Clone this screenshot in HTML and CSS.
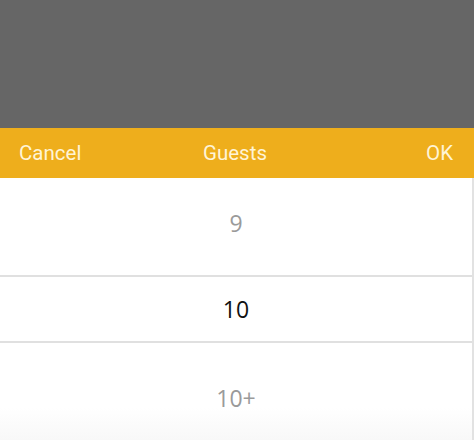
FILE: index.html
```html
<!DOCTYPE html>
<html>
<head>
<meta charset="utf-8">
<link rel="stylesheet" href="styles.css">
</head>
<body>
<div class="screen">
  <div class="backdrop"></div>
  <div class="toolbar">
    <span class="btn btn-left">Cancel</span>
    <span class="title">Guests</span>
    <span class="btn btn-right">OK</span>
  </div>
  <div class="picker">
    <div class="row row-top"><span class="item dim">9</span></div>
    <div class="divider"></div>
    <div class="row row-mid"><span class="item sel">10</span></div>
    <div class="divider"></div>
    <div class="row row-bot"><span class="item dim">10+</span></div>
  </div>
</div>
</body>
</html>
```
FILE: styles.css
```css
html, body {
  margin: 0;
  padding: 0;
  width: 474px;
  height: 440px;
  overflow: hidden;
  background: #ffffff;
}
.screen {
  width: 474px;
  height: 440px;
  display: flex;
  flex-direction: column;
}
.backdrop {
  height: 128px;
  background: #666666;
}
.toolbar {
  height: 50px;
  background: #eeae1c;
  display: grid;
  grid-template-columns: 1fr auto 1fr;
  align-items: center;
  padding: 0 21px 0 19px;
  font-family: Roboto, "Liberation Sans", sans-serif;
  font-size: 20.5px;
  color: #fff4d6;
}
.btn-left { justify-self: start; }
.btn-right { justify-self: end; }
.title { justify-self: center; margin-right: 2px; }
.picker {
  flex: 1;
  display: flex;
  flex-direction: column;
  border-right: 2px solid #e2e2e2;
  background: linear-gradient(to bottom, #ffffff 0, #ffffff 230px, #f8f8f8 262px);
  font-family: "Open Sans", "Noto Sans", sans-serif;
  font-size: 23px;
}
.row {
  display: flex;
  justify-content: center;
}
.row-top {
  height: 97px;
  align-items: flex-start;
}
.row-top .item { margin-top: 30px; }
.row-mid {
  height: 64px;
  align-items: center;
}
.row-bot {
  flex: 1;
}
.row-bot .item { margin-top: 40px; }
.item {
  line-height: 30px;
}
.dim { color: #9a9a9a; }
.sel { color: #111111; }
.divider {
  height: 2px;
  background: #e0e0e0;
}
```
